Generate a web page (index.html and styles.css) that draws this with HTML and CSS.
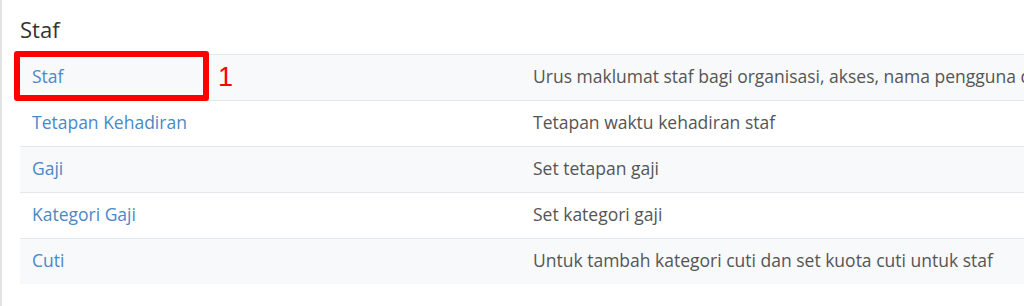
FILE: index.html
```html
<!DOCTYPE html>
<html lang="en">
<head>
  <meta charset="UTF-8" />
  <meta name="viewport" content="width=device-width, initial-scale=1" />
  <title>Staf</title>
  <link rel="stylesheet" href="styles.css">
</head>
<body>
  <div class="page">
    <h2 class="section-title">Staf</h2>
    <table class="settings">
      <tr>
        <td class="name">
          <a href="#">Staf</a>
          <span class="mark"></span>
          <span class="mark-num">1</span>
        </td>
        <td class="desc">Urus maklumat staf bagi organisasi, akses, nama pengguna dan kata laluan</td>
      </tr>
      <tr>
        <td class="name"><a href="#">Tetapan Kehadiran</a></td>
        <td class="desc">Tetapan waktu kehadiran staf</td>
      </tr>
      <tr>
        <td class="name"><a href="#">Gaji</a></td>
        <td class="desc">Set tetapan gaji</td>
      </tr>
      <tr>
        <td class="name"><a href="#">Kategori Gaji</a></td>
        <td class="desc">Set kategori gaji</td>
      </tr>
      <tr>
        <td class="name"><a href="#">Cuti</a></td>
        <td class="desc">Untuk tambah kategori cuti dan set kuota cuti untuk staf</td>
      </tr>
    </table>
  </div>
</body>
</html>
```

FILE: styles.css
```css
body {
  margin: 0;
  font-family: "Open Sans", "Noto Sans", sans-serif;
  background: #fff;
  overflow: hidden;
}
.page {
  border-left: 2px solid #e2e2e2;
  padding: 15px 0 0 18px;
  min-height: 306px;
  box-sizing: border-box;
}
.section-title {
  margin: 0 0 11px 0;
  font-size: 22px;
  font-weight: 400;
  color: #333;
  line-height: 28px;
}
.settings {
  border-collapse: collapse;
  width: 1300px;
  table-layout: fixed;
}
.settings tr:nth-child(odd) {
  background: #f8f9fb;
}
.settings td {
  height: 42px;
  padding: 0 12px 3px;
  font-size: 17.5px;
  color: #555;
  border-top: 1px solid #e4e8ec;
  white-space: nowrap;
  vertical-align: middle;
}
.settings td.name {
  width: 477px;
  position: relative;
}
.settings a {
  color: #4a88c8;
  text-decoration: none;
}
.mark {
  position: absolute;
  left: -6px;
  top: -4px;
  width: 183px;
  height: 38px;
  border: 6px solid #ff0000;
  border-radius: 3px;
}
.mark-num {
  position: absolute;
  left: 198px;
  top: 6px;
  font-family: "Liberation Sans", Arial, sans-serif;
  font-size: 27px;
  color: #ff0000;
  line-height: 32px;
}
```
